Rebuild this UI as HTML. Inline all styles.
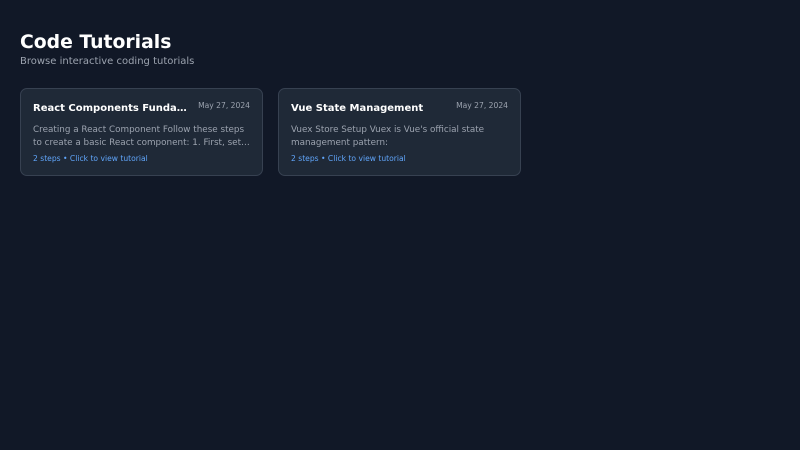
<!DOCTYPE html>
<html><head><style>
body{margin:0;background:#111827;font-family:"DejaVu Sans","Liberation Sans",sans-serif;width:800px;height:450px;overflow:hidden}
h1{position:absolute;left:20px;top:32px;margin:0;font-size:18.8px;font-weight:bold;color:#fff;line-height:22px}
.sub{position:absolute;left:20px;top:55px;font-size:10px;color:#9ca3af;line-height:14px}
.card{position:absolute;top:88px;width:241px;height:86px;background:#1f2937;border:1px solid #374151;border-radius:7px}
.t{position:absolute;left:12px;top:13px;font-size:10px;font-weight:bold;color:#fff;width:155px;white-space:nowrap;overflow:hidden;text-overflow:ellipsis;line-height:14px}
.d{position:absolute;right:12px;top:12px;font-size:7.6px;color:#9ca3af;line-height:10px}
.p{position:absolute;left:12px;top:35px;width:226px;font-size:8.8px;color:#9ca3af;line-height:12.5px;height:25px;overflow:hidden}
.p span{display:block;white-space:nowrap;overflow:hidden}
.l{position:absolute;left:12px;top:65px;font-size:7.6px;color:#60a5fa;line-height:10px}
</style></head><body>
<h1>Code Tutorials</h1>
<div class="sub">Browse interactive coding tutorials</div>
<div class="card" style="left:20px">
<div class="t">React Components Fundamentals</div><div class="d">May 27, 2024</div>
<div class="p"><span>Creating a React Component Follow these steps</span><span>to create a basic React component: 1. First, set…</span></div>
<div class="l">2 steps • Click to view tutorial</div></div>
<div class="card" style="left:278px">
<div class="t">Vue State Management</div><div class="d">May 27, 2024</div>
<div class="p"><span>Vuex Store Setup Vuex is Vue's official state</span><span>management pattern:</span></div>
<div class="l">2 steps • Click to view tutorial</div></div>
</body></html>
